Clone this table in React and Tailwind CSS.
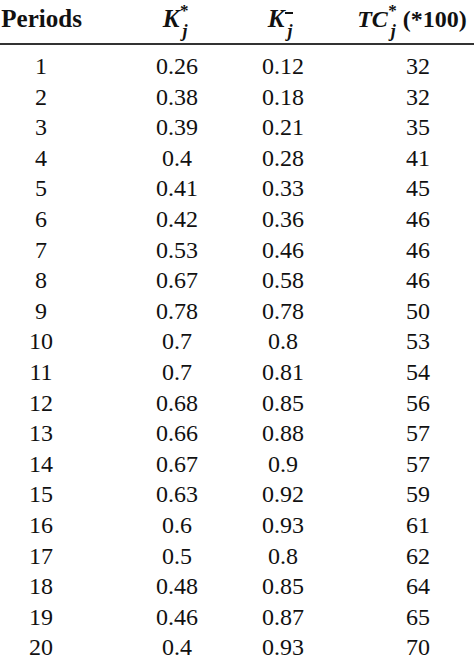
const rows = [
  [1, "0.26", "0.12", 32],
  [2, "0.38", "0.18", 32],
  [3, "0.39", "0.21", 35],
  [4, "0.4", "0.28", 41],
  [5, "0.41", "0.33", 45],
  [6, "0.42", "0.36", 46],
  [7, "0.53", "0.46", 46],
  [8, "0.67", "0.58", 46],
  [9, "0.78", "0.78", 50],
  [10, "0.7", "0.8", 53],
  [11, "0.7", "0.81", 54],
  [12, "0.68", "0.85", 56],
  [13, "0.66", "0.88", 57],
  [14, "0.67", "0.9", 57],
  [15, "0.63", "0.92", 59],
  [16, "0.6", "0.93", 61],
  [17, "0.5", "0.8", 62],
  [18, "0.48", "0.85", 64],
  [19, "0.46", "0.87", 65],
  [20, "0.4", "0.93", 70],
];

// letter with superscript mark and subscript j
const Sym = ({ base, mark, minus }) => (
  <span className="relative inline-block pr-[9px] italic">
    {base}
    {minus ? (
      <span className="absolute right-[0px] top-[8px] h-[1.5px] w-[8px] bg-[#111]" />
    ) : (
      <span className="absolute right-[0px] top-[-2px] text-[17px] leading-none not-italic">
        {mark}
      </span>
    )}
    <span className="absolute right-[1px] top-[18px] text-[18px] leading-none">j</span>
  </span>
);

const App = () => {
  return (
    <div className="w-[474px] h-[663px] overflow-hidden bg-white text-[#111] font-['Liberation_Serif',serif] text-[24px]">
      <div className="flex h-[45px] border-b-2 border-[#333] pt-[4px] text-[25px] font-bold leading-[30px]">
        <div className="w-[84px] text-center">Periods</div>
        <div className="ml-[40px] w-[106px] text-center">
          <Sym base="K" mark="*" />
        </div>
        <div className="w-[106px] text-center">
          <Sym base="K" minus />
        </div>
        <div className="ml-[24px] w-[118px] whitespace-nowrap text-left text-[24px]">
          <Sym base="TC" mark="*" /> (*100)
        </div>
      </div>
      <div className="pt-[6px]">
        {rows.map((r) => (
          <div key={r[0]} className="flex h-[30.6px] leading-[30.6px]">
            <div className="w-[82px] text-center">{r[0]}</div>
            <div className="ml-[42px] w-[106px] text-center">{r[1]}</div>
            <div className="w-[106px] text-center">{r[2]}</div>
            <div className="ml-[26px] w-[112px] text-center">{r[3]}</div>
          </div>
        ))}
      </div>
    </div>
  );
};

export default App;
